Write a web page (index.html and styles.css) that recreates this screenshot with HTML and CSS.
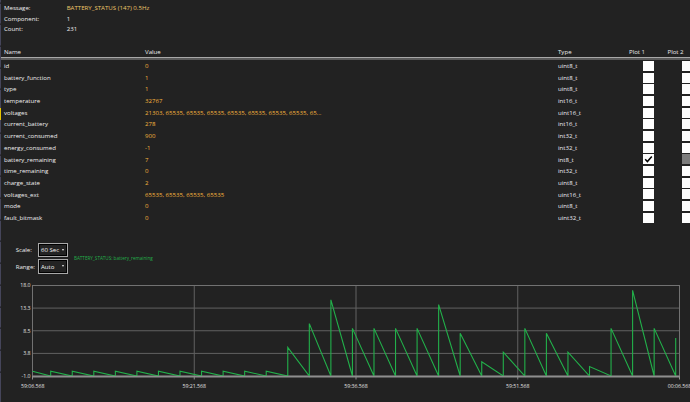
FILE: index.html
```html
<!DOCTYPE html>
<html>
<head>
<meta charset="utf-8">
<link rel="stylesheet" href="styles.css">
</head>
<body>
<div class="app">
  <div class="edge"></div>
  <div class="main">
    <div class="info">
      <div class="info-row"><span>Message:</span><span class="msg">BATTERY_STATUS (147) 0.5Hz</span></div>
      <div class="info-row"><span>Component:</span><span>1</span></div>
      <div class="info-row"><span>Count:</span><span>231</span></div>
    </div>

    <div class="table">
      <div class="row thead">
        <span>Name</span><span>Value</span><span>Type</span><span>Plot 1</span><span>Plot 2</span>
      </div>
      <div class="tbody">
        <div class="row tr"><span>id</span><span class="val">0</span><span class="typ">uint8_t</span><span class="cell"><span class="cb"></span></span><span class="cell"><span class="cb"></span></span></div>
        <div class="row tr"><span>battery_function</span><span class="val">1</span><span class="typ">uint8_t</span><span class="cell"><span class="cb"></span></span><span class="cell"><span class="cb"></span></span></div>
        <div class="row tr"><span>type</span><span class="val">1</span><span class="typ">uint8_t</span><span class="cell"><span class="cb"></span></span><span class="cell"><span class="cb"></span></span></div>
        <div class="row tr"><span>temperature</span><span class="val">32767</span><span class="typ">int16_t</span><span class="cell"><span class="cb"></span></span><span class="cell"><span class="cb"></span></span></div>
        <div class="row tr"><span>voltages</span><span class="val">21303, 65535, 65535, 65535, 65535, 65535, 65535, 65535, 65...</span><span class="typ">uint16_t</span><span class="cell"><span class="cb"></span></span><span class="cell"><span class="cb"></span></span></div>
        <div class="row tr"><span>current_battery</span><span class="val">278</span><span class="typ">int16_t</span><span class="cell"><span class="cb"></span></span><span class="cell"><span class="cb"></span></span></div>
        <div class="row tr"><span>current_consumed</span><span class="val">900</span><span class="typ">int32_t</span><span class="cell"><span class="cb"></span></span><span class="cell"><span class="cb"></span></span></div>
        <div class="row tr"><span>energy_consumed</span><span class="val">-1</span><span class="typ">int32_t</span><span class="cell"><span class="cb"></span></span><span class="cell"><span class="cb"></span></span></div>
        <div class="row tr"><span>battery_remaining</span><span class="val">7</span><span class="typ">int8_t</span><span class="cell"><span class="cb"><svg class="tick" viewBox="0 0 11 10" width="11" height="10"><path d="M2.2 5.2 L4.4 7.6 L8.8 2.4" fill="none" stroke="#000" stroke-width="1.5"/></svg></span></span><span class="cell"><span class="cb off"></span></span></div>
        <div class="row tr"><span>time_remaining</span><span class="val">0</span><span class="typ">int32_t</span><span class="cell"><span class="cb"></span></span><span class="cell"><span class="cb"></span></span></div>
        <div class="row tr"><span>charge_state</span><span class="val">2</span><span class="typ">uint8_t</span><span class="cell"><span class="cb"></span></span><span class="cell"><span class="cb"></span></span></div>
        <div class="row tr"><span>voltages_ext</span><span class="val">65535, 65535, 65535, 65535</span><span class="typ">uint16_t</span><span class="cell"><span class="cb"></span></span><span class="cell"><span class="cb"></span></span></div>
        <div class="row tr"><span>mode</span><span class="val">0</span><span class="typ">uint8_t</span><span class="cell"><span class="cb"></span></span><span class="cell"><span class="cb"></span></span></div>
        <div class="row tr"><span>fault_bitmask</span><span class="val">0</span><span class="typ">uint32_t</span><span class="cell"><span class="cb"></span></span><span class="cell"><span class="cb"></span></span></div>
      </div>
    </div>

    <div class="controls">
      <div class="ctl-grid">
        <span class="lbl">Scale:</span>
        <div class="combo"><span>60 Sec</span><span class="arrow"></span></div>
        <span class="lbl">Range:</span>
        <div class="combo"><span>Auto</span><span class="arrow"></span></div>
      </div>
      <div class="legend">BATTERY_STATUS: battery_remaining</div>
    </div>

    <svg class="chart" width="689" height="122" viewBox="1 280 689 122">
      <g class="grid">
        <line x1="33" y1="308.1" x2="679" y2="308.1"/>
        <line x1="33" y1="330.75" x2="679" y2="330.75"/>
        <line x1="33" y1="353.4" x2="679" y2="353.4"/>
        <line x1="194.25" y1="286" x2="194.25" y2="376"/>
        <line x1="356" y1="286" x2="356" y2="376"/>
        <line x1="517.75" y1="286" x2="517.75" y2="376"/>
      </g>
      <rect class="frame" x="32.5" y="285.5" width="647" height="90.5"/>
      <polyline class="series" points="32.5,371.24 50.70,376 50.70,371.24 72.25,376 72.25,371.24 93.80,376 93.80,371.24 115.36,376 115.36,371.24 136.91,376 136.91,371.24 158.46,376 158.46,371.24 180.01,376 180.01,371.24 201.56,376 201.56,371.24 223.12,376 223.12,371.24 244.67,376 244.67,371.24 266.22,376 266.22,371.24 287.77,376 287.77,347.42 309.32,376 309.32,323.61 330.88,376 330.88,299.79 352.43,376 352.43,328.37 373.98,376 373.98,328.37 395.53,376 395.53,328.37 417.08,376 417.08,328.37 438.64,376 438.64,304.56 460.19,376 460.19,333.13 481.74,376 481.74,361.71 503.29,376 503.29,352.19 524.84,376 524.84,328.37 546.40,376 546.40,333.13 567.95,376 567.95,352.19 589.50,376 589.50,366.47 611.05,376 611.05,328.37 632.60,376 632.60,290.26 654.16,376 654.16,328.37 675.71,376 675.71,337.90"/>
      <g class="axis">
        <line x1="32" y1="376.6" x2="680" y2="376.6"/>
        <line x1="32.5" y1="376" x2="32.5" y2="379.5"/>
        <line x1="194.25" y1="376" x2="194.25" y2="379.5"/>
        <line x1="356" y1="376" x2="356" y2="379.5"/>
        <line x1="517.75" y1="376" x2="517.75" y2="379.5"/>
        <line x1="679.5" y1="376" x2="679.5" y2="379.5"/>
      </g>
      <g class="ylab">
        <text x="30.5" y="287.4">18.0</text>
        <text x="30.5" y="310">13.3</text>
        <text x="30.5" y="332.6">8.5</text>
        <text x="30.5" y="355.2">3.8</text>
        <text x="30.5" y="377.9">-1.0</text>
      </g>
      <g class="xlab">
        <text x="32.7" y="388">59:06.568</text>
        <text x="194.25" y="388">59:21.568</text>
        <text x="356" y="388">59:36.568</text>
        <text x="517.75" y="388">59:51.568</text>
        <text x="679.5" y="388">00:06.568</text>
      </g>
    </svg>
  </div>
</div>
</body>
</html>
```
FILE: styles.css
```css
* { box-sizing: border-box; }
html, body { margin: 0; padding: 0; }
body {
  background: #222222;
  color: #f0f0f0;
  font-family: "Open Sans", "Noto Sans", sans-serif;
  font-size: 6.1px;
  overflow: hidden;
  width: 690px;
  height: 402px;
}
.app { display: flex; height: 402px; }
.edge {
  width: 1px;
  flex: none;
  background:
    linear-gradient(to bottom, transparent 108px, #e6c400 108px, #e6c400 120px, transparent 120px),
    repeating-linear-gradient(to bottom, #45455a 0, #45455a 20.7px, #141418 20.7px, #141418 21.7px);
  background-position: 0 0, 0 -18.4px;
}
.main { flex: 1; min-width: 0; overflow: hidden; }

.info { height: 46px; padding: 3px 0 0 3px; }
.info-row {
  display: grid;
  grid-template-columns: 62.7px 1fr;
  height: 10.5px;
  line-height: 10.5px;
  white-space: nowrap;
}
.msg { color: #eec76a; }

.row {
  display: grid;
  grid-template-columns: 141px 413px 71px 38.5px 1fr;
  white-space: nowrap;
  padding-left: 3px;
}
.thead {
  height: 12px;
  line-height: 11px;
  border-bottom: 1px solid #a8a8a8;
  box-shadow: 0 2px 0 #5a5a5a;
  color: #ececec;
}
.tbody { padding-top: 2px; }
.tr { height: 11.7px; line-height: 11.7px; }
.val { color: #f6b53e; }
.typ { color: #ececf4; }
.cell { display: block; }
.cb {
  display: block;
  width: 11px;
  height: 10px;
  margin: 0.85px 0 0 14px;
  background: #fdfdfd;
  position: relative;
}
.cb.off { background: #7c7c7c; }
.tick { display: block; }

.controls {
  margin-top: 18.9px;
  display: flex;
  padding-left: 14.7px;
  height: 31px;
}
.ctl-grid {
  display: grid;
  grid-template-columns: 22.6px 30px;
  grid-template-rows: 14.5px 14.5px;
  row-gap: 2px;
  align-items: center;
}
.lbl { color: #ececec; }
.combo {
  height: 14.5px;
  border: 1px solid #a9a9a9;
  box-shadow: inset 0 0 0 1px #000;
  background: #232323;
  display: flex;
  align-items: center;
  justify-content: space-between;
  padding: 0 3px 0 1.7px;
  color: #f4f4f4;
}
.arrow {
  width: 0;
  height: 0;
  border-left: 1.6px solid transparent;
  border-right: 1.6px solid transparent;
  border-top: 2px solid #f0f0f0;
}
.legend {
  align-self: center;
  margin-left: 5.7px;
  color: #22b04a;
  font-size: 4.6px;
  white-space: nowrap;
}

.chart { display: block; margin-top: 6.3px; }
.grid line { stroke: #626262; stroke-width: 1; }
.frame { fill: none; stroke: #727272; stroke-width: 1; }
.series { fill: none; stroke: #22b04a; stroke-width: 1.1; stroke-linejoin: miter; }
.axis line { stroke: #8e8e8e; stroke-width: 1; }
.axis line:first-child { stroke-width: 1.6; }
.ylab text, .xlab text {
  font-family: "Open Sans", "Noto Sans", sans-serif;
  font-size: 5.2px;
  fill: #e0e0e0;
}
.ylab text { text-anchor: end; }
.xlab text { text-anchor: middle; }
```
